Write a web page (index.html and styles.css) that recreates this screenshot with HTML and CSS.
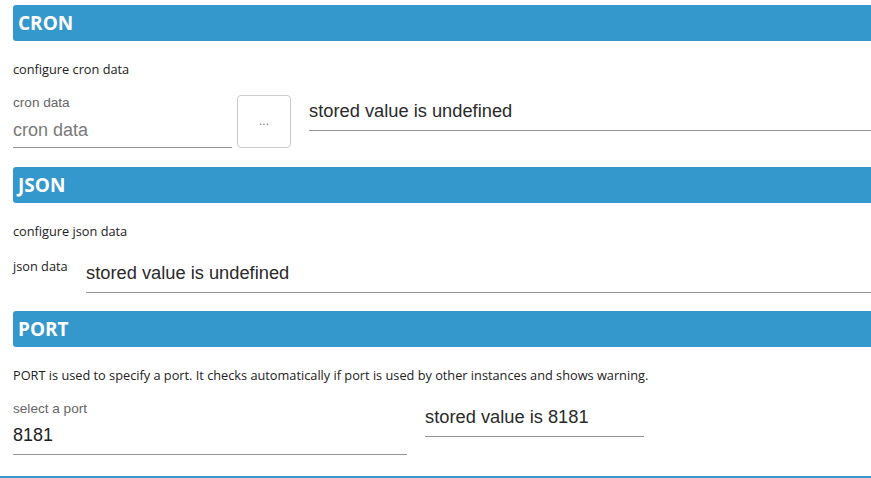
FILE: index.html
```html
<!DOCTYPE html>
<html lang="en">
<head>
<meta charset="utf-8">
<title>Config</title>
<link rel="stylesheet" href="styles.css">
</head>
<body>
<div class="page">
  <section class="section section-cron">
    <div class="section-header">CRON</div>
    <div class="description">configure cron data</div>
    <div class="row row-cron">
      <div class="field field-cron">
        <div class="field-label">cron data</div>
        <div class="field-input placeholder">cron data</div>
      </div>
      <div class="btn-more"><span class="dots">...</span></div>
      <div class="stored stored-wide">stored value is undefined</div>
    </div>
  </section>

  <section class="section section-json">
    <div class="section-header">JSON</div>
    <div class="description">configure json data</div>
    <div class="row row-json">
      <div class="inline-label">json data</div>
      <div class="stored stored-wide stored-json">stored value is undefined</div>
    </div>
  </section>

  <section class="section section-port">
    <div class="section-header">PORT</div>
    <div class="description">PORT is used to specify a port. It checks automatically if port is used by other instances and shows warning.</div>
    <div class="row row-port">
      <div class="field field-port">
        <div class="field-label">select a port</div>
        <div class="field-input value port-input">8181</div>
      </div>
      <div class="stored stored-port">stored value is 8181</div>
    </div>
  </section>

  <div class="bottom-rule"></div>
</div>
</body>
</html>
```

FILE: styles.css
```css
html, body {
  margin: 0;
  padding: 0;
  overflow: hidden;
  background: #ffffff;
}

.page {
  width: 871px;
  padding-top: 5px;
}

.section-header {
  margin-left: 13px;
  height: 36px;
  line-height: 36px;
  padding-left: 5px;
  background: #3498cc;
  color: #ffffff;
  font-family: "Open Sans", "Noto Sans", sans-serif;
  font-weight: 700;
  font-size: 19px;
  border-radius: 3px 0 0 3px;
}

.description {
  margin: 20px 0 0 13px;
  font-family: "Open Sans", "Noto Sans", sans-serif;
  font-size: 12.75px;
  line-height: 16px;
  color: #222222;
}

.row {
  display: flex;
  align-items: flex-start;
  margin-left: 13px;
}

.row-cron { margin-top: 18px; margin-bottom: 19px; }
.row-json { margin-top: 19px; margin-bottom: 18px; }
.row-port { margin-top: 18px; }

.field-label {
  font-family: "Liberation Sans", Arial, sans-serif;
  font-size: 13.6px;
  line-height: 16px;
  color: #666666;
}

.field-input {
  font-family: "Liberation Sans", Arial, sans-serif;
  font-size: 18px;
  line-height: 24px;
  border-bottom: 1px solid #949494;
}

.field-cron { width: 219px; }
.field-cron .field-input { margin-top: 7px; padding-bottom: 5px; }

.field-port { width: 394px; }
.port-input { margin-top: 6px; padding-bottom: 7px; }

.placeholder { color: #7a7a7a; }
.value { color: #222222; }

.btn-more {
  box-sizing: border-box;
  width: 54px;
  height: 53px;
  margin-left: 5px;
  border: 1px solid #cccccc;
  border-radius: 4px;
  display: flex;
  align-items: center;
  justify-content: center;
}

.dots {
  font-family: "Liberation Sans", Arial, sans-serif;
  font-size: 12px;
  color: #777777;
  line-height: 12px;
  position: relative;
  top: -1px;
}

.stored {
  font-family: "Liberation Sans", Arial, sans-serif;
  font-size: 18.3px;
  line-height: 24px;
  color: #2a2a2a;
  padding-bottom: 7px;
  border-bottom: 1px solid #949494;
  margin-top: 4px;
}

.stored-wide { flex: 1; margin-left: 18px; }
.stored-json { margin-left: 0; margin-top: 3px; }

.inline-label {
  width: 73px;
  font-family: "Open Sans", "Noto Sans", sans-serif;
  font-size: 12.75px;
  line-height: 16px;
  color: #222222;
}

.stored-port {
  width: 219px;
  margin-left: 18px;
}

.bottom-rule {
  margin-top: 21px;
  height: 2px;
  background: #3498cc;
}
```
